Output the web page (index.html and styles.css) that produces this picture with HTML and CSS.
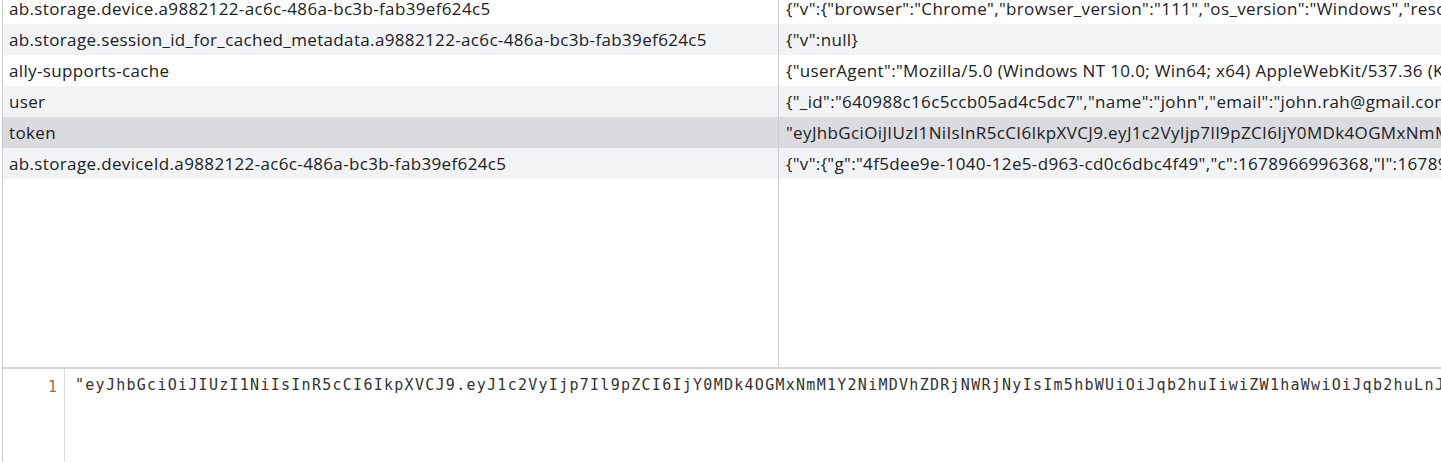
FILE: index.html
```html
<!DOCTYPE html>
<html>
<head>
<meta charset="utf-8">
<link rel="stylesheet" href="styles.css">
</head>
<body>
<div class="panel">
  <div class="grid">
    <div class="rows">
      <div class="col keys">
        <div class="cell">ab.storage.device.a9882122-ac6c-486a-bc3b-fab39ef624c5</div>
        <div class="cell alt">ab.storage.session_id_for_cached_metadata.a9882122-ac6c-486a-bc3b-fab39ef624c5</div>
        <div class="cell">ally-supports-cache</div>
        <div class="cell alt">user</div>
        <div class="cell sel">token</div>
        <div class="cell alt">ab.storage.deviceId.a9882122-ac6c-486a-bc3b-fab39ef624c5</div>
      </div>
      <div class="col vals">
        <div class="cell">{"v":{"browser":"Chrome","browser_version":"111","os_version":"Windows","resolution":"1920x1080","locale":"en-us","platform":"Web"}}</div>
        <div class="cell alt">{"v":null}</div>
        <div class="cell">{"userAgent":"Mozilla/5.0 (Windows NT 10.0; Win64; x64) AppleWebKit/537.36 (KHTML, like Gecko) Chrome/111.0.0.0 Safari/537.36"}</div>
        <div class="cell alt">{"_id":"640988c16c5ccb05ad4c5dc7","name":"john","email":"john.rah@gmail.com"}</div>
        <div class="cell sel">"eyJhbGciOiJIUzI1NiIsInR5cCI6IkpXVCJ9.eyJ1c2VyIjp7Il9pZCI6IjY0MDk4OGMxNmM1Y2NiMDVhZDRjNWRjNyIsIm5hbWUiOiJqb2huIiwiZW1haWwiOiJqb2huLnJhaEBnbWFpbC5jb20ifX0"</div>
        <div class="cell alt">{"v":{"g":"4f5dee9e-1040-12e5-d963-cd0c6dbc4f49","c":1678966996368,"l":1678966996368}}</div>
      </div>
    </div>
  </div>
  <div class="editor">
    <div class="gutter"><span class="ln">1</span></div>
    <div class="code">"eyJhbGciOiJIUzI1NiIsInR5cCI6IkpXVCJ9.eyJ1c2VyIjp7Il9pZCI6IjY0MDk4OGMxNmM1Y2NiMDVhZDRjNWRjNyIsIm5hbWUiOiJqb2huIiwiZW1haWwiOiJqb2huLnJhaEBnbWFpbC5jb20ifX0"</div>
  </div>
</div>
</body>
</html>
```
FILE: styles.css
```css
html, body {
  margin: 0;
  padding: 0;
  background: #ffffff;
  overflow: hidden;
}
.panel {
  margin-left: 2px;
  border-left: 1px solid #cbcdd1;
  height: 462px;
  display: flex;
  flex-direction: column;
  font-family: "Open Sans", "Noto Sans", sans-serif;
  color: #202124;
}
.grid {
  height: 367px;
  overflow: hidden;
  flex: none;
}
.rows {
  display: flex;
  margin-top: -7px;
  height: 374px;
}
.col {
  display: flex;
  flex-direction: column;
  min-width: 0;
}
.keys {
  width: 775px;
  flex: none;
}
.vals {
  flex: 1;
  border-left: 1px solid #cbcdd1;
  overflow: hidden;
}
.cell {
  height: 31px;
  line-height: 31px;
  font-size: 17px;
  letter-spacing: 0.35px;
  white-space: nowrap;
  overflow: hidden;
  background: #ffffff;
}
.keys .cell { padding-left: 6px; }
.vals .cell { padding-left: 7px; }
.cell.alt { background: #f1f3f4; }
.cell.sel { background: #dadbde; }
.editor {
  flex: 1;
  display: flex;
  border-top: 2px solid #d6d6d6;
  overflow: hidden;
}
.gutter {
  width: 62px;
  flex: none;
  border-right: 1px solid #dddddd;
  text-align: right;
  padding-right: 7px;
  box-sizing: border-box;
  padding-top: 6px;
}
.ln {
  font-family: "DejaVu Sans Mono", monospace;
  font-size: 15px;
  line-height: 20px;
  color: #b0683f;
}
.code {
  padding-left: 10px;
  padding-top: 6px;
  font-family: "DejaVu Sans Mono", monospace;
  font-size: 15px;
  letter-spacing: 1.27px;
  line-height: 20px;
  color: #333333;
  white-space: nowrap;
}
```
